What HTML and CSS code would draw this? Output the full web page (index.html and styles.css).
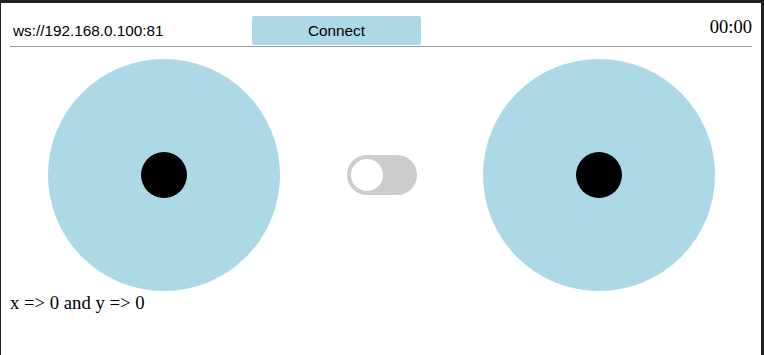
FILE: index.html
```html
<!DOCTYPE html>
<html lang="en">
<head>
    <meta charset="UTF-8">
    <meta name="viewport" content="width=device-width, initial-scale=1.0">
    <title>Robot Controller</title>
    <link rel="stylesheet" href="styles.css">
</head>
<body>
    <div class="frame">
        <header class="topbar">
            <input class="address" type="text" id="address" value="ws://192.168.0.100:81">
            <button class="connect" id="connect">Connect</button>
            <span class="timer" id="timer">00:00</span>
        </header>

        <main class="pad">
            <div class="joystick" id="left"><div class="stick"></div></div>
            <label class="switch">
                <input type="checkbox" id="mode">
                <span class="slider"></span>
            </label>
            <div class="joystick" id="right"><div class="stick"></div></div>
        </main>

        <p class="readout" id="readout">x =&gt; 0 and y =&gt; 0</p>
    </div>
</body>
</html>
```

FILE: styles.css
```css
body {
    margin: 0;
    background-color: #fff;
}
.frame {
    min-height: 352px;
    padding: 0 9px;
    border-top: 3px solid #202124;
    border-left: 1px solid #202124;
    border-right: 3px solid #202124;
    background-color: #fff;
}
.topbar {
    display: flex;
    align-items: flex-start;
    padding: 13px 0 1px;
    border-bottom: 1px solid #9a9a9a;
}
.address {
    width: 242px;
    height: 29px;
    box-sizing: border-box;
    padding: 0 3px;
    border: none;
    outline: none;
    background: transparent;
    font-family: "Liberation Sans", Arial, sans-serif;
    font-size: 15.3px;
    color: #000;
}
.connect {
    width: 169px;
    height: 29px;
    padding: 0;
    border: none;
    border-radius: 2px;
    background-color: #add8e6;
    font-family: "Liberation Sans", Arial, sans-serif;
    font-size: 15.3px;
    color: #000;
    cursor: pointer;
}
.timer {
    margin-left: auto;
    margin-top: 1px;
    font-family: "Liberation Serif", "Times New Roman", serif;
    font-size: 18.5px;
}
.pad {
    display: flex;
    align-items: center;
    justify-content: space-between;
    margin-top: 12px;
    padding: 0 37px 0 38px;
}
.joystick {
    width: 232px;
    height: 232px;
    border-radius: 50%;
    background-color: #add8e6;
    display: flex;
    align-items: center;
    justify-content: center;
}
.stick {
    width: 46px;
    height: 46px;
    border-radius: 50%;
    background-color: #000;
}
.switch {
    position: relative;
    display: inline-block;
    width: 70px;
    height: 40px;
}
.switch input {
    opacity: 0;
    width: 0;
    height: 0;
}
.slider {
    position: absolute;
    inset: 0;
    border-radius: 20px;
    background-color: #ccc;
    cursor: pointer;
}
.slider::before {
    content: "";
    position: absolute;
    left: 4px;
    top: 4px;
    width: 32px;
    height: 32px;
    border-radius: 50%;
    background-color: #fff;
}
.readout {
    margin: 1px 0 0;
    font-family: "Liberation Serif", "Times New Roman", serif;
    font-size: 18.7px;
}
```
